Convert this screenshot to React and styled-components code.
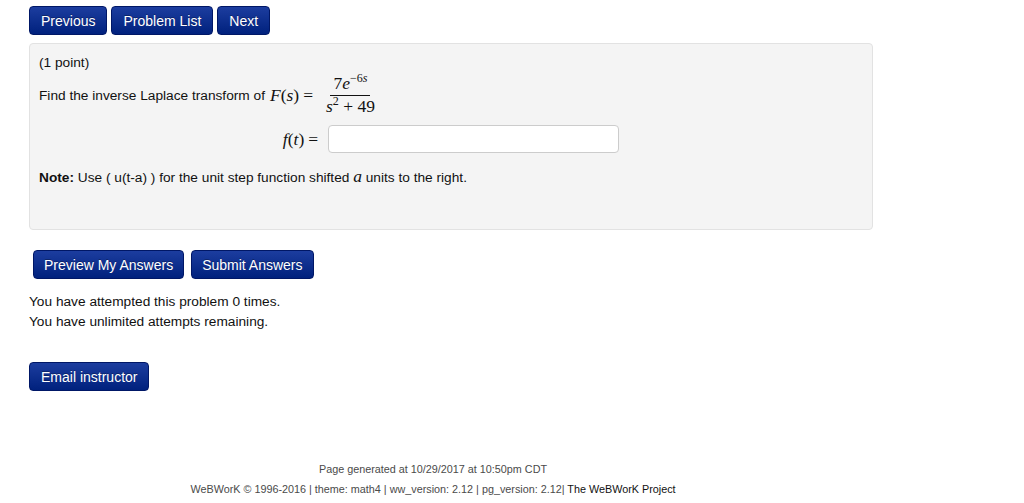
import styled, { createGlobalStyle } from "styled-components";

const GlobalStyle = createGlobalStyle`
  body {
    margin: 0;
    background: #fff;
    font-family: "Liberation Sans", Arial, sans-serif;
    font-size: 13.7px;
    color: #111;
  }
`;

const Page = styled.div`
  padding: 6px 0 0 29px;
  width: 845px;
`;

const ButtonRow = styled.div`
  display: flex;
  gap: ${(p) => p.$gap || 4}px;
  margin: ${(p) => p.$margin || 0};
`;

const NavButton = styled.button`
  height: 29px;
  padding: 0 ${(p) => p.$pad || 11}px;
  font-family: "Liberation Sans", Arial, sans-serif;
  font-size: 14px;
  color: #fff;
  text-shadow: 0 -1px 0 rgba(0, 0, 0, 0.3);
  background: linear-gradient(#1c3d9f, #00217d);
  border: 1px solid #001766;
  border-radius: 4px;
  cursor: pointer;
`;

const ProblemBox = styled.div`
  margin-top: 8px;
  width: 844px;
  height: 187px;
  box-sizing: border-box;
  background: #f4f4f4;
  border: 1px solid #e2e2e2;
  border-radius: 4px;
  padding: 10px 9px;
`;

const Line = styled.div`
  line-height: 18px;
`;

const ProblemLine = styled.div`
  display: flex;
  align-items: center;
  height: 44px;
  margin-top: 1px;
  gap: 0;
`;

const Lead = styled.span`
  margin-right: 5px;
`;

const Math = styled.span`
  font-family: "Liberation Serif", "Times New Roman", serif;
  font-size: ${(p) => p.$size || 17.5}px;
  font-style: ${(p) => (p.$upright ? "normal" : "italic")};
  margin: 0 ${(p) => p.$space || 0}px;
  white-space: nowrap;
`;

const Fraction = styled.span`
  display: inline-flex;
  flex-direction: column;
  align-items: center;
  margin-left: 6px;
`;

const Numerator = styled.span`
  padding: 0 3px 1px;
  border-bottom: 1px solid #111;
  line-height: 19px;
`;

const Denominator = styled.span`
  padding: 1px 3px 0;
  line-height: 19px;
`;

const Sup = styled.sup`
  vertical-align: 7px;
  line-height: 0;
`;

const AnswerRow = styled.div`
  display: flex;
  align-items: center;
  justify-content: center;
  margin-top: 8px;
  gap: 5px;
`;

const AnswerInput = styled.input`
  width: 291px;
  height: 28px;
  box-sizing: border-box;
  border: 1px solid #cccccc;
  border-radius: 4px;
  background: #fff;
  margin-left: 1px;
`;

const Note = styled.div`
  margin-top: 14px;
  line-height: 18px;
`;

const Info = styled.div`
  margin-top: 13px;
  line-height: 20px;
`;

const Footer = styled.div`
  margin-top: 68px;
  width: 808px;
  text-align: center;
  font-size: 10.8px;
  color: #4a4a4a;
  line-height: 20px;
`;

const FooterLink = styled.span`
  color: #111;
`;

export default function App() {
  return (
    <>
      <GlobalStyle />
      <Page>
        <ButtonRow>
          <NavButton>Previous</NavButton>
          <NavButton>Problem List</NavButton>
          <NavButton>Next</NavButton>
        </ButtonRow>

        <ProblemBox>
          <Line>(1 point)</Line>
          <ProblemLine>
            <Lead>Find the inverse Laplace transform of</Lead>
            <Math>F</Math>
            <Math $upright>(</Math>
            <Math>s</Math>
            <Math $upright>)</Math>
            <Math $upright $space={4}>=</Math>
            <Fraction>
              <Numerator>
                <Math $upright>7</Math>
                <Math>e</Math>
                <Sup>
                  <Math $upright $size={12}>−6</Math>
                  <Math $size={12}>s</Math>
                </Sup>
              </Numerator>
              <Denominator>
                <Math>s</Math>
                <Sup>
                  <Math $upright $size={12}>2</Math>
                </Sup>
                <Math $upright> + 49</Math>
              </Denominator>
            </Fraction>
          </ProblemLine>
          <AnswerRow>
            <span>
              <Math>f</Math>
              <Math $upright>(</Math>
              <Math>t</Math>
              <Math $upright>)</Math>
              <Math $upright $space={4}>=</Math>
            </span>
            <AnswerInput type="text" />
          </AnswerRow>
          <Note>
            <b>Note:</b> Use ( u(t-a) ) for the unit step function shifted{" "}
            <Math>a</Math> units to the right.
          </Note>
        </ProblemBox>

        <ButtonRow $gap={7} $margin="20px 0 0 4px">
          <NavButton $pad={10}>Preview My Answers</NavButton>
          <NavButton $pad={10}>Submit Answers</NavButton>
        </ButtonRow>

        <Info>
          You have attempted this problem 0 times.
          <br />
          You have unlimited attempts remaining.
        </Info>

        <ButtonRow $margin="30px 0 0 0">
          <NavButton $pad={11}>Email instructor</NavButton>
        </ButtonRow>

        <Footer>
          Page generated at 10/29/2017 at 10:50pm CDT
          <br />
          WeBWorK © 1996-2016 | theme: math4 | ww_version: 2.12 | pg_version:
          2.12| <FooterLink>The WeBWorK Project</FooterLink>
        </Footer>
      </Page>
    </>
  );
}
